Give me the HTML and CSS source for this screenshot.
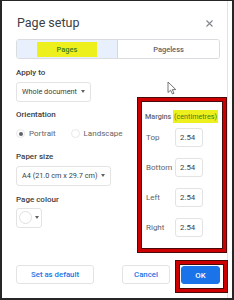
FILE: index.html
```html
<!DOCTYPE html>
<html lang="en">
<head>
    <meta charset="UTF-8">
    <title>Page setup</title>
    <link rel="stylesheet" href="styles.css">
</head>
<body>
    <div class="shot">
        <div class="dialog">
            <div class="title-row">
                <h1 class="title">Page setup</h1>
                <svg class="close" width="7" height="7" viewBox="0 0 7 7">
                    <path d="M0.5 0.5 L6.5 6.5 M6.5 0.5 L0.5 6.5" stroke="#80868b" stroke-width="1.1"/>
                </svg>
            </div>

            <div class="tabs">
                <button class="tab tab-active"><span class="hl">Pages</span></button>
                <button class="tab">Pageless</button>
            </div>

            <div class="content">
                <div class="left-col">
                    <div class="label label-first">Apply to</div>
                    <div class="select select-first">Whole document <span class="caret"></span></div>

                    <div class="label label-orient">Orientation</div>
                    <div class="radios">
                        <span class="radio"><span class="radio-dot radio-on"></span>Portrait</span>
                        <span class="radio"><span class="radio-dot"></span>Landscape</span>
                    </div>

                    <div class="label label-paper">Paper size</div>
                    <div class="select select-paper">A4 (21.0 cm x 29.7 cm) <span class="caret"></span></div>

                    <div class="label label-colour">Page colour</div>
                    <div class="color-pick"><span class="swatch"></span><span class="caret"></span></div>
                </div>

                <div class="margins">
                    <div class="margins-title">Margins <span class="hl hl-small">(centimetres)</span></div>
                    <div class="margin-row margin-row-first"><span class="margin-label">Top</span><span class="margin-input">2.54</span></div>
                    <div class="margin-row"><span class="margin-label">Bottom</span><span class="margin-input">2.54</span></div>
                    <div class="margin-row"><span class="margin-label">Left</span><span class="margin-input">2.54</span></div>
                    <div class="margin-row"><span class="margin-label">Right</span><span class="margin-input">2.54</span></div>
                </div>
            </div>

            <div class="footer">
                <button class="btn btn-default">Set as default</button>
                <button class="btn btn-cancel">Cancel</button>
                <span class="ok-mark"><button class="btn btn-ok">OK</button></span>
            </div>
        </div>

        <!-- mouse pointer -->
        <svg class="cursor" width="10" height="14" viewBox="0 0 10 14">
            <path d="M1 1 L1 11.5 L3.6 9.2 L5.4 13 L7 12.3 L5.3 8.6 L8.8 8.6 Z" fill="#fff" stroke="#666" stroke-width="0.9" stroke-linejoin="round"/>
        </svg>
    </div>
</body>
</html>
```

FILE: styles.css
```css
* {
    margin: 0;
    padding: 0;
    box-sizing: border-box;
    font-family: Roboto, 'Liberation Sans', sans-serif;
}

body {
    background: #fff;
}

.shot {
    position: relative;
    width: 234px;
    height: 300px;
    border: 2px solid #262626;
    border-top-width: 1px;
    padding-right: 4px;
    background: #fff;
    overflow: hidden;
}

.dialog {
    height: 100%;
    border-right: 1px solid #e3e3e3;
    padding: 0 7px 0 14px;
    display: flex;
    flex-direction: column;
}

.title-row {
    margin-top: 12px;
    height: 20px;
    display: flex;
    align-items: center;
    justify-content: space-between;
}

.title {
    font-size: 12.5px;
    line-height: 20px;
    font-weight: 400;
    color: #3c4043;
    padding-left: 1px;
}

.close {
    margin-right: 7px;
}

.tabs {
    margin-top: 6px;
    height: 20px;
    display: flex;
    border: 1px solid #dadce0;
    border-radius: 3px;
    overflow: hidden;
}

.tab {
    flex: 1;
    border: none;
    background: #fff;
    font-size: 7.5px;
    font-weight: 500;
    color: #5f6368;
    display: flex;
    align-items: center;
    justify-content: center;
}

.tab-active {
    flex: 0 0 101px;
    background: #e8f0fe;
    border-right: 1px solid #c6dafc;
}

.hl {
    background: #eef01e;
    color: #3d7d1c;
    padding: 3px 20px;
}

.hl-small {
    padding: 2px 1px;
    font-weight: 400;
}

.content {
    display: flex;
}

.left-col {
    flex: 1;
}

.label {
    font-size: 8px;
    line-height: 12px;
    font-weight: 500;
    color: #3c4043;
}

.label-first { margin-top: 8px; }
.label-orient { margin-top: 7px; }
.label-paper { margin-top: 10px; }
.label-colour { margin-top: 8px; }

.select {
    display: inline-flex;
    align-items: center;
    gap: 4px;
    height: 20px;
    padding: 0 5px;
    border: 1px solid #e3e3e3;
    border-radius: 3px;
    font-size: 7.3px;
    color: #3c4043;
}

.select-first { margin-top: 2px; }
.select-paper { margin-top: 3px; }

.caret {
    width: 0;
    height: 0;
    border-left: 2.5px solid transparent;
    border-right: 2.5px solid transparent;
    border-top: 3px solid #5f6368;
}

.radios {
    margin-top: 6px;
    height: 14px;
    display: flex;
    align-items: center;
    gap: 15px;
}

.radio {
    display: flex;
    align-items: center;
    gap: 4px;
    font-size: 8px;
    color: #5f6368;
}

.radio-dot {
    width: 9px;
    height: 9px;
    border: 1px solid #e8e8e8;
    border-radius: 50%;
    display: flex;
    align-items: center;
    justify-content: center;
}

.radio-on::after {
    content: '';
    width: 4px;
    height: 4px;
    border-radius: 50%;
    background: #5f6368;
}

.color-pick {
    margin-top: 2px;
    width: 26px;
    height: 20px;
    border: 1px solid #e3e3e3;
    border-radius: 3px;
    display: flex;
    align-items: center;
    padding-left: 2px;
    gap: 3px;
}

.swatch {
    width: 13px;
    height: 13px;
    border: 1px solid #e0e0e0;
    border-radius: 50%;
}

.margins {
    margin-top: 39px;
    margin-right: -6px;
    width: 88px;
    height: 154px;
    border: 3px solid #cc0000;
    box-shadow: 0 0 0 1px #4a0a0a, inset 0 0 0 1px #4a0a0a;
    padding-left: 4px;
}

.margins-title {
    margin-top: 10px;
    font-size: 7.2px;
    line-height: 12px;
    font-weight: 500;
    color: #5f6368;
    white-space: nowrap;
}

.margin-row {
    display: flex;
    align-items: center;
    height: 19px;
    margin-top: 11px;
}

.margin-row-first {
    margin-top: 5px;
}

.margin-label {
    width: 30px;
    padding-left: 1px;
    font-size: 8px;
    color: #5f6368;
}

.margin-input {
    width: 28px;
    height: 19px;
    border: 1px solid #e3e3e3;
    border-radius: 3px;
    padding-left: 4px;
    display: flex;
    align-items: center;
    font-size: 7.8px;
    color: #3c4043;
}

.footer {
    margin-top: 9px;
    display: flex;
    align-items: flex-start;
}

.btn {
    height: 19px;
    border: 1px solid #e3e3e3;
    border-radius: 3px;
    background: #fff;
    font-size: 7.8px;
    font-weight: 500;
    color: #1a73e8;
}

.btn-default {
    width: 78px;
    margin-top: 4px;
}

.btn-cancel {
    width: 48px;
    margin-top: 4px;
    margin-left: auto;
}

.ok-mark {
    margin-left: 6px;
    margin-right: -7px;
    padding: 2px 4px 5px 2px;
    border: 3px solid #cc0000;
    box-shadow: 0 0 0 1px #4a0a0a, inset 0 0 0 1px #4a0a0a;
    display: flex;
}

.btn-ok {
    width: 39px;
    height: 18px;
    background: #1a73e8;
    border-color: #1a73e8;
    color: #fff;
}

.cursor {
    position: absolute;
    left: 165px;
    top: 80px;
}
```
